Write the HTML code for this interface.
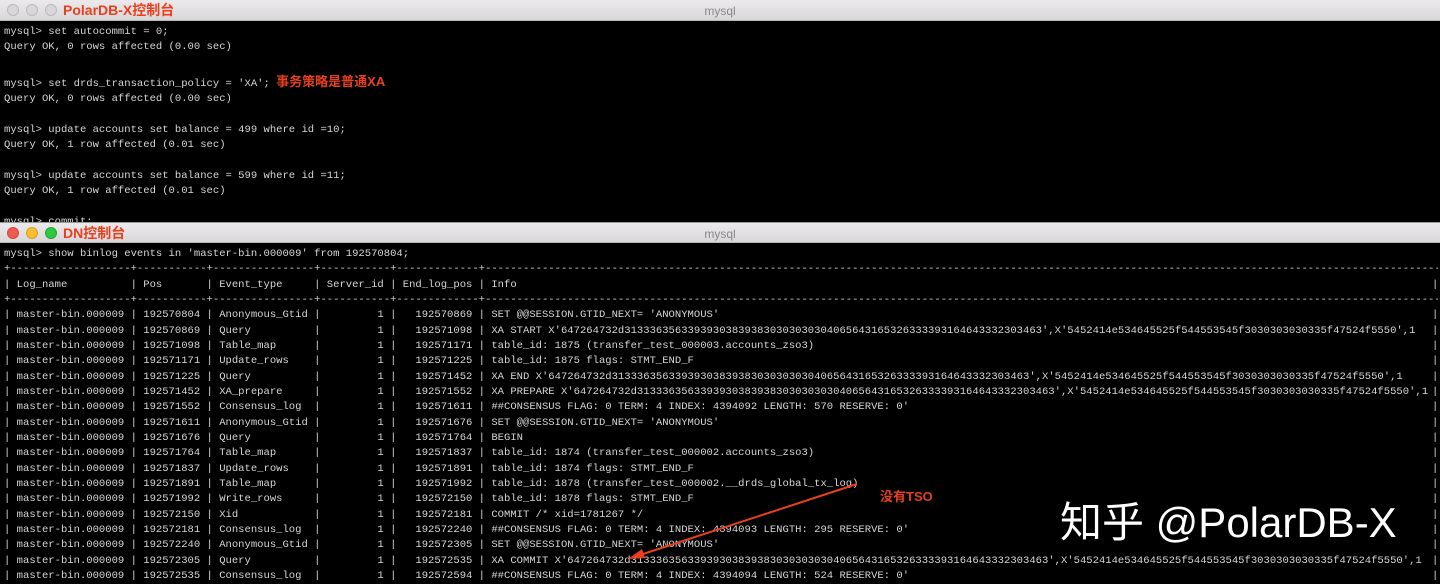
<!DOCTYPE html>
<html><head><meta charset="utf-8"><style>
*{margin:0;padding:0;box-sizing:border-box}
body{width:1440px;height:584px;overflow:hidden;background:#000;position:relative;font-family:"Liberation Mono",monospace}
.bar{position:absolute;left:0;width:1440px;background:linear-gradient(#ebe9eb,#d9d7d9);border-bottom:1px solid #b8b8b8}
.bar .t{position:absolute;left:0;right:0;text-align:center;font:12px "Liberation Sans",sans-serif;color:#8a8a8a}
.dot{position:absolute;width:12px;height:12px;border-radius:50%}
.lbl{position:absolute;font:bold 14px "Liberation Sans","Noto Sans CJK SC",sans-serif;color:#e8401f}
.term{position:absolute;left:4px;font-size:10.55px;line-height:15.33px;color:#d6d6d6}
.pre{white-space:pre}
.term div{height:15.33px;position:relative;white-space:pre;overflow:hidden;width:1434px}
.r{position:absolute;left:1428px;top:0}
</style></head><body>
<div class="bar" style="top:0;height:21px">
<div class="dot" style="left:7px;top:4px;background:#d8d6d8;border:1px solid #bbb"></div>
<div class="dot" style="left:26px;top:4px;background:#d8d6d8;border:1px solid #bbb"></div>
<div class="dot" style="left:45px;top:4px;background:#d8d6d8;border:1px solid #bbb"></div>
<div class="lbl" style="left:63px;top:0px">PolarDB-X控制台</div>
<div class="t" style="top:4px">mysql</div>
</div>
<div class="term pre" style="top:25px">mysql&gt; set autocommit = 0;
Query OK, 0 rows affected (0.00 sec)

mysql&gt; set drds_transaction_policy = 'XA'; <span style="font:bold 13px 'Liberation Sans','Noto Sans CJK SC',sans-serif;color:#e8401f">事务策略是普通XA</span>
Query OK, 0 rows affected (0.00 sec)

mysql&gt; update accounts set balance = 499 where id =10;
Query OK, 1 row affected (0.01 sec)

mysql&gt; update accounts set balance = 599 where id =11;
Query OK, 1 row affected (0.01 sec)

mysql&gt; commit;</div>
<div class="bar" style="top:222px;height:21px;border-top:1px solid #999">
<div class="dot" style="left:7px;top:4px;background:#ee5a52;border:1px solid #d04a42"></div>
<div class="dot" style="left:26px;top:4px;background:#f5bd30;border:1px solid #d9a020"></div>
<div class="dot" style="left:45px;top:4px;background:#2fc841;border:1px solid #20a830"></div>
<div class="lbl" style="left:63px;top:0px">DN控制台</div>
<div class="t" style="top:4px">mysql</div>
</div>
<div class="term" style="top:247px"><div>mysql&gt; show binlog events in 'master-bin.000009' from 192570804;</div><div>+-------------------+-----------+----------------+-----------+-------------+------------------------------------------------------------------------------------------------------------------------------------------------------------------------------------------</div><div>| Log_name          | Pos       | Event_type     | Server_id | End_log_pos | Info<span class="r">|</span></div><div>+-------------------+-----------+----------------+-----------+-------------+------------------------------------------------------------------------------------------------------------------------------------------------------------------------------------------</div><div>| master-bin.000009 | 192570804 | Anonymous_Gtid |         1 |   192570869 | SET @@SESSION.GTID_NEXT= 'ANONYMOUS'<span class="r">|</span></div><div>| master-bin.000009 | 192570869 | Query          |         1 |   192571098 | XA START X'647264732d313336356339393038393830303030304065643165326333393164643332303463',X'5452414e534645525f544553545f3030303030335f47524f5550',1<span class="r">|</span></div><div>| master-bin.000009 | 192571098 | Table_map      |         1 |   192571171 | table_id: 1875 (transfer_test_000003.accounts_zso3)<span class="r">|</span></div><div>| master-bin.000009 | 192571171 | Update_rows    |         1 |   192571225 | table_id: 1875 flags: STMT_END_F<span class="r">|</span></div><div>| master-bin.000009 | 192571225 | Query          |         1 |   192571452 | XA END X'647264732d313336356339393038393830303030304065643165326333393164643332303463',X'5452414e534645525f544553545f3030303030335f47524f5550',1<span class="r">|</span></div><div>| master-bin.000009 | 192571452 | XA_prepare     |         1 |   192571552 | XA PREPARE X'647264732d313336356339393038393830303030304065643165326333393164643332303463',X'5452414e534645525f544553545f3030303030335f47524f5550',1<span class="r">|</span></div><div>| master-bin.000009 | 192571552 | Consensus_log  |         1 |   192571611 | ##CONSENSUS FLAG: 0 TERM: 4 INDEX: 4394092 LENGTH: 570 RESERVE: 0'<span class="r">|</span></div><div>| master-bin.000009 | 192571611 | Anonymous_Gtid |         1 |   192571676 | SET @@SESSION.GTID_NEXT= 'ANONYMOUS'<span class="r">|</span></div><div>| master-bin.000009 | 192571676 | Query          |         1 |   192571764 | BEGIN<span class="r">|</span></div><div>| master-bin.000009 | 192571764 | Table_map      |         1 |   192571837 | table_id: 1874 (transfer_test_000002.accounts_zso3)<span class="r">|</span></div><div>| master-bin.000009 | 192571837 | Update_rows    |         1 |   192571891 | table_id: 1874 flags: STMT_END_F<span class="r">|</span></div><div>| master-bin.000009 | 192571891 | Table_map      |         1 |   192571992 | table_id: 1878 (transfer_test_000002.__drds_global_tx_log)<span class="r">|</span></div><div>| master-bin.000009 | 192571992 | Write_rows     |         1 |   192572150 | table_id: 1878 flags: STMT_END_F<span class="r">|</span></div><div>| master-bin.000009 | 192572150 | Xid            |         1 |   192572181 | COMMIT /* xid=1781267 */<span class="r">|</span></div><div>| master-bin.000009 | 192572181 | Consensus_log  |         1 |   192572240 | ##CONSENSUS FLAG: 0 TERM: 4 INDEX: 4394093 LENGTH: 295 RESERVE: 0'<span class="r">|</span></div><div>| master-bin.000009 | 192572240 | Anonymous_Gtid |         1 |   192572305 | SET @@SESSION.GTID_NEXT= 'ANONYMOUS'<span class="r">|</span></div><div>| master-bin.000009 | 192572305 | Query          |         1 |   192572535 | XA COMMIT X'647264732d313336356339393038393830303030304065643165326333393164643332303463',X'5452414e534645525f544553545f3030303030335f47524f5550',1<span class="r">|</span></div><div>| master-bin.000009 | 192572535 | Consensus_log  |         1 |   192572594 | ##CONSENSUS FLAG: 0 TERM: 4 INDEX: 4394094 LENGTH: 524 RESERVE: 0'<span class="r">|</span></div></div>
<svg style="position:absolute;left:0;top:0" width="1440" height="584">
<line x1="857" y1="484" x2="640" y2="555" stroke="#e8401f" stroke-width="2"/>
<polygon points="628,559 642,549 645,558" fill="#e8401f"/>
</svg>
<div class="lbl" style="left:880px;top:486px;font-size:13px">没有TSO</div>
<div style="position:absolute;left:1060px;top:497px;font:42px 'Liberation Sans','Noto Sans CJK SC',sans-serif;color:#fff;line-height:52px;white-space:nowrap">知乎 @PolarDB-X</div>
</body></html>
